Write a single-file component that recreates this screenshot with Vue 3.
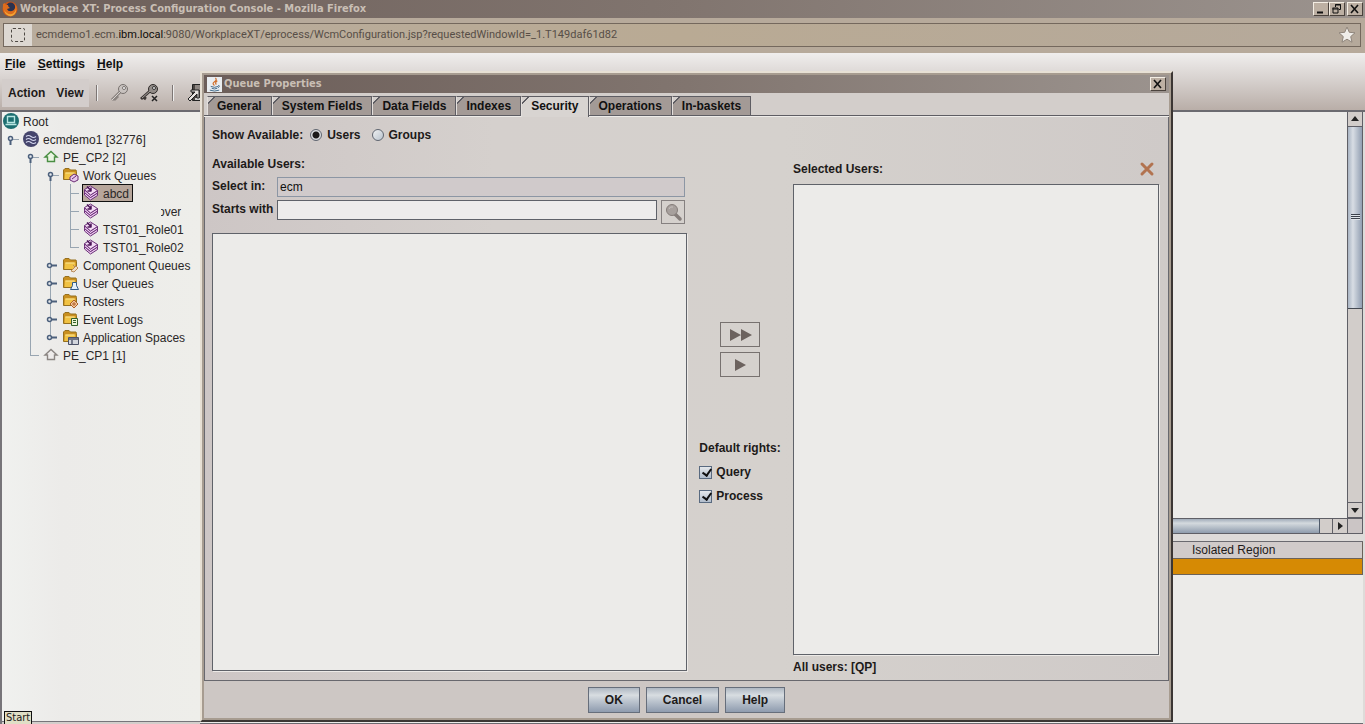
<script setup>
import { ref } from 'vue'

const menus = ['File', 'Settings', 'Help']
const tabs = ['General', 'System Fields', 'Data Fields', 'Indexes', 'Security', 'Operations', 'In-baskets']
const activeTab = ref('Security')
const source = ref('users')
const query = ref(true)
const process = ref(true)
const domain = ref('ecm')
const startsWith = ref('')

const tree = [
  { label: 'Root', icon: 'root', guides: [] },
  { label: 'ecmdemo1 [32776]', icon: 'server', guides: ['open-last'] },
  { label: 'PE_CP2 [2]', icon: 'home-on', guides: ['blank', 'open'] },
  { label: 'Work Queues', icon: 'f-work', guides: ['blank', 'line', 'open'] },
  { label: 'abcd', icon: 'queue', guides: ['blank', 'line', 'line', 'tee'], selected: true },
  { label: 'over', icon: 'queue', guides: ['blank', 'line', 'line', 'tee'], masked: true },
  { label: 'TST01_Role01', icon: 'queue', guides: ['blank', 'line', 'line', 'tee'] },
  { label: 'TST01_Role02', icon: 'queue', guides: ['blank', 'line', 'line', 'elbow'] },
  { label: 'Component Queues', icon: 'f-comp', guides: ['blank', 'line', 'closed'] },
  { label: 'User Queues', icon: 'f-user', guides: ['blank', 'line', 'closed'] },
  { label: 'Rosters', icon: 'f-roster', guides: ['blank', 'line', 'closed'] },
  { label: 'Event Logs', icon: 'f-log', guides: ['blank', 'line', 'closed'] },
  { label: 'Application Spaces', icon: 'f-app', guides: ['blank', 'line', 'closed-end'] },
  { label: 'PE_CP1 [1]', icon: 'home-off', guides: ['blank', 'elbow'] }
]
</script>

<template>
  <div class="window">
    <header class="titlebar">
      <svg class="fox" viewBox="0 0 16 16">
        <circle cx="8" cy="8" r="7.5" fill="#c9561a" />
        <circle cx="8.6" cy="6.2" r="4.6" fill="#2b3350" />
        <path d="M1 3Q0 12 5 14Q12 16 15 9Q15 5 13 3Q14 9 10 10Q6 11 5 8L8 7Q6 6 6 4Q3 4 3 2Z" fill="#de6c1c" />
        <path d="M2 9Q5 14 10 13Q14 11 14 7Q15 13 10 15Q4 16 2 9Z" fill="#f0a637" />
      </svg>
      <h1>Workplace XT: Process Configuration Console - Mozilla Firefox</h1>
      <div class="controls">
        <button aria-label="Minimize"><svg viewBox="0 0 12 10"><path d="M2 8.500h6" stroke="#111" stroke-width="2" /></svg></button>
        <button aria-label="Restore"><svg viewBox="0 0 12 10"><path d="M4.500 3V.5h5v5H8M4 1h6M1.500 4h5.500v5H2V4M1.500 5h6" fill="none" stroke="#111" /></svg></button>
        <button class="apart" aria-label="Close"><svg viewBox="0 0 12 10"><path d="M2 1l7 8M9 1L2 9" stroke="#111" stroke-width="1.600" /></svg></button>
      </div>
    </header>

    <div class="location">
      <div class="address">
        <span class="identity"><i></i></span>
        <span class="url">ecmdemo1.ecm.<b>ibm.local</b>:9080/WorkplaceXT/eprocess/WcmConfiguration.jsp?requestedWindowId=_1.T149daf61d82</span>
        <svg class="star" viewBox="0 0 18 18"><path d="M9 1l2.300 5.300 5.700.5-4.300 3.800 1.300 5.600L9 13.200l-5 3 1.300-5.600L1 6.800l5.700-.5z" fill="#efede9" stroke="#8f857b" /></svg>
      </div>
    </div>

    <div class="chrome">
      <nav class="menubar">
        <button v-for="m in menus" :key="m"><u>{{ m[0] }}</u>{{ m.slice(1) }}</button>
      </nav>
      <div class="toolbar">
        <div class="toolmenu"><button>Action</button><button>View</button></div>
        <i class="sep"></i>
        <button class="tool" aria-label="Connect">
          <svg viewBox="0 0 20 20"><path d="M2 17l8-8M4 15l2 2M6 13l2 2" stroke="#8b8480" stroke-width="3" /><circle cx="13" cy="6" r="4.500" fill="#c8c2bf" stroke="#77716e" /><path d="M2 17l8-8" stroke="#d8d3d0" /><circle cx="14" cy="5" r="1.500" fill="#fff" stroke="#77716e" /></svg>
        </button>
        <button class="tool" aria-label="Disconnect">
          <svg viewBox="0 0 20 20"><path d="M1 16l9-8M3 14l3 2" stroke="#3c3735" stroke-width="3" /><circle cx="13" cy="6" r="4.500" fill="#928c88" stroke="#2e2a28" /><path d="M2 15l8-7" stroke="#aaa39f" /><circle cx="14" cy="5" r="1.500" fill="#eee" stroke="#333" /><path d="M12 13l5 5M17 13l-5 5" stroke="#222" stroke-width="1.500" /></svg>
        </button>
        <i class="sep"></i>
        <button class="tool save" aria-label="Commit">
          <svg viewBox="0 0 20 20"><path d="M6.500 1.500h12v16h-12z" fill="#4a4542" stroke="#222" /><path d="M9 2h7v5H9z" fill="#8d8682" /><path d="M9 16h6" stroke="#ccc" stroke-width="2" /><path d="M2 16l7-7H5V7h8v8h-2v-4l-7 7z" fill="#e6e2df" stroke="#222" /></svg>
        </button>
      </div>
    </div>

    <main class="workspace">
      <ul class="tree">
        <li v-for="n in tree" :key="n.label" class="node">
          <svg v-for="(g, i) in n.guides" :key="i" class="guide" viewBox="0 0 20 18">
            <g fill="none" stroke="#98a5b1">
              <path v-if="g === 'line' || g === 'tee' || g === 'closed'" d="M8.500 0v18" />
              <path v-if="g === 'elbow' || g === 'closed-end'" d="M8.500 0v9" />
              <path v-if="g === 'tee' || g === 'elbow' || g === 'open' || g === 'open-last'" d="M8 9.500h9" />
              <path v-if="g === 'open'" d="M8.500 9v9" />
            </g>
            <g v-if="g === 'open' || g === 'open-last'" stroke="#4c607c"><path d="M8.500 9v6" stroke-width="2" /><circle cx="8.500" cy="8.500" r="2" fill="#e6eaee" stroke-width="1.500" /></g>
            <g v-if="g === 'closed' || g === 'closed-end'" stroke="#4c607c"><path d="M8 9.500h7" stroke-width="2" /><circle cx="7.500" cy="9.500" r="2" fill="#e6eaee" stroke-width="1.500" /></g>
          </svg>
          <a href="#" class="entry" :class="{ selected: n.selected }">
            <svg class="icon" viewBox="0 0 18 18">
              <template v-if="n.icon === 'root'">
                <circle cx="9" cy="9" r="8" fill="#1c6e70" />
                <path d="M5.500 4.500h7v6h-7zM3.500 12.500h11" fill="none" stroke="#b7e6e2" stroke-width="1.400" />
              </template>
              <template v-else-if="n.icon === 'server'">
                <circle cx="9" cy="9" r="8" fill="#45456c" />
                <path d="M4 6.500q2.500-2 5 0t5 0M4 9.500q2.500-2 5 0t5 0M4 12.500q2.500-2 5 0t5 0" fill="none" stroke="#d3d6ee" stroke-width="1.200" />
              </template>
              <path v-else-if="n.icon === 'home-on'" d="M3 9L9 3.500 15 9h-2.500v4.500h-7V9z" fill="#eaf5e2" stroke="#4a8e43" stroke-width="1.400" />
              <path v-else-if="n.icon === 'home-off'" d="M3 9L9 3.500 15 9h-2.500v4.500h-7V9z" fill="#eeeceb" stroke="#8b8683" stroke-width="1.400" />
              <g v-else-if="n.icon === 'queue'" stroke="#6b3078" stroke-linejoin="round">
                <path d="M2.500 11l6 5 7-4.500V9l-7 4.500-6-5z" fill="#ecc9ef" />
                <path d="M2.500 8.500l6 5 7-4.500V6.500l-7 4.500-6-5z" fill="#ecc9ef" />
                <path d="M2.500 5.500L8.500 2l7 4.500-7 4.500z" fill="#f4dcf5" />
                <path d="M5 2.500l4 4M9 3.500V7H5.500" fill="none" stroke="#4a1457" stroke-width="1.500" />
              </g>
              <g v-else>
                <path d="M1.500 13.500V4L3 2.500h4L8.500 4H14l.5 1.500v8z" fill="#c98f1f" stroke="#96701f" />
                <path d="M2.500 13L3 6.500h10.500l-.5 6.500z" fill="#f0c244" />
                <path d="M3.500 7h9" stroke="#fbe596" />
                <g v-if="n.icon === 'f-work'"><path d="M8 11l4-3 4 2v4l-4 2-4-2z" fill="#e8c8ec" stroke="#6a2c73" /><path d="M10 13l4-3" stroke="#6a2c73" /></g>
                <path v-if="n.icon === 'f-comp'" d="M9 15l5-5 2 2-4 4zM11 9l2 2" fill="#f1dfc5" stroke="#b98d5e" />
                <path v-if="n.icon === 'f-user'" d="M8.500 15.500l2-4v-3h4v3l2 4z" fill="#e4f1fb" stroke="#315b86" />
                <path v-if="n.icon === 'f-roster'" d="M8 12l4-4 4 4-4 4zM10 12h4M12 10v4" fill="#f3c99e" stroke="#b0602a" />
                <path v-if="n.icon === 'f-log'" d="M9.500 8.500h6v7h-6zM11 10.500h3M11 12.500h3" fill="#eef5d8" stroke="#33602b" />
                <g v-if="n.icon === 'f-app'"><path d="M6.500 9.500h10v7h-10z" fill="#d3d6dd" stroke="#4d5368" /><path d="M7 11h9M10 12v4" stroke="#4d5368" stroke-width="1.400" /></g>
              </g>
            </svg>
            <span :class="{ masked: n.masked }">{{ n.label }}</span>
          </a>
        </li>
      </ul>

      <div class="details">
        <section class="canvas">
          <div class="sheet"></div>
          <div class="vscroll">
            <button aria-label="Scroll up"><svg viewBox="0 0 14 14"><path d="M7 4l4 5H3z" fill="#222" /></svg></button>
            <div class="vthumb"><i></i></div>
            <div class="vtrack"></div>
            <button aria-label="Scroll down"><svg viewBox="0 0 14 14"><path d="M7 10L3 5h8z" fill="#222" /></svg></button>
          </div>
          <div class="hscroll">
            <div class="hthumb"></div>
            <div class="htrack"></div>
            <button aria-label="Scroll right"><svg viewBox="0 0 14 14"><path d="M10 7L5 11V3z" fill="#222" /></svg></button>
          </div>
          <i class="corner"></i>
        </section>
        <section class="regions">
          <table>
            <thead><tr><td></td><th>Isolated Region</th></tr></thead>
            <tbody><tr><td></td><td></td></tr></tbody>
          </table>
        </section>
      </div>
    </main>

    <section class="dialog" role="dialog" aria-labelledby="dialog-title">
      <header class="dialog-title">
        <svg class="java" viewBox="0 0 16 16"><path d="M0 0h16v16H0z" fill="#e9edf0" /><path d="M9 1q2 2-1 4t0 4M11 4q-3 2-1 4" fill="none" stroke="#d06f2c" stroke-width="1.300" /><path d="M4 10q4 2 8 0M5 12q3 1.500 6 0M3 14q5 2 10 0M12 9q2.500 0 0 2.500" fill="none" stroke="#3f6788" /></svg>
        <h2 id="dialog-title">Queue Properties</h2>
        <button aria-label="Close dialog"><svg viewBox="0 0 12 10"><path d="M2 1l7 8M9 1L2 9" stroke="#111" stroke-width="1.600" /></svg></button>
      </header>

      <div class="tabs" role="tablist">
        <button v-for="t in tabs" :key="t" role="tab" :aria-selected="t === activeTab" :class="{ active: t === activeTab }" @click="activeTab = t">{{ t }}</button>
      </div>

      <div class="panel">
        <div class="available">
          <div class="show">
            <span>Show Available:</span>
            <label><input v-model="source" type="radio" name="source" value="users" />Users</label>
            <label><input v-model="source" type="radio" name="source" value="groups" />Groups</label>
          </div>
          <h3>Available Users:</h3>
          <div class="field">
            <label for="domain">Select in:</label>
            <input id="domain" v-model="domain" class="readonly" readonly />
          </div>
          <div class="field">
            <label for="starts">Starts with</label>
            <input id="starts" v-model="startsWith" />
            <button class="search" aria-label="Search">
              <svg viewBox="0 0 22 22"><path d="M13 13l5 5" stroke="#857d7a" stroke-width="3.500" stroke-linecap="round" /><circle cx="10" cy="9" r="5.500" fill="#a7a09d" stroke="#857d7a" /><path d="M7 8q1-3 4-2" fill="none" stroke="#c5bfbc" /></svg>
            </button>
          </div>
          <div class="list"></div>
        </div>

        <div class="transfer">
          <div class="arrows">
            <button aria-label="Add all"><svg viewBox="0 0 24 14"><path d="M2 1l11 6-11 6zM13 1l11 6-11 6z" fill="#6c625e" /></svg></button>
            <button aria-label="Add"><svg viewBox="0 0 24 14"><path d="M7 1l11 6-11 6z" fill="#6c625e" /></svg></button>
          </div>
          <fieldset>
            <legend>Default rights:</legend>
            <label><input v-model="query" type="checkbox" />Query</label>
            <label><input v-model="process" type="checkbox" />Process</label>
          </fieldset>
        </div>

        <div class="chosen">
          <div class="chosen-head">
            <h3>Selected Users:</h3>
            <button aria-label="Remove"><svg viewBox="0 0 16 16"><path d="M3 3l10 10M13 3L3 13" stroke="#b27350" stroke-width="3" stroke-linecap="round" /></svg></button>
          </div>
          <div class="list"></div>
          <p>All users: [QP]</p>
        </div>
      </div>

      <footer class="actions">
        <button>OK</button><button>Cancel</button><button>Help</button>
      </footer>
    </section>

    <div class="tip">Start</div>
  </div>
</template>

<style>
body { overflow: hidden; }
</style>

<style scoped>
* { box-sizing: border-box; }
.window { position: relative; display: flex; flex-direction: column; height: 100vh; overflow: hidden; background: #d3cecb; font: 12px/18px "Liberation Sans", Arial, sans-serif; color: #1d1a19; }
button, input { font: inherit; color: inherit; margin: 0; padding: 0; border: 0; background: none; }
h1, h2, h3, p, ul, fieldset { margin: 0; padding: 0; border: 0; font-size: 12px; }
svg { display: block; flex: none; }

.titlebar, .dialog-title { display: flex; align-items: center; gap: 2px; height: 18px; background: linear-gradient(90deg, #6c5e59, #81756f 50%, #9b938e); }
.titlebar { padding: 0 2px; }
.titlebar h1, .dialog-title h2 { flex: 1; font: bold 11px/18px "DejaVu Sans Condensed", "DejaVu Sans", sans-serif; color: #c9bfb5; white-space: nowrap; }
.fox { width: 16px; height: 16px; }
.controls { display: flex; }
.controls button, .dialog-title button { width: 16px; height: 14px; display: grid; place-items: center; background: #bdb0a3; border: 1px solid; border-color: #f3ede3 #4b433d #4b433d #f3ede3; }
.controls svg, .dialog-title button svg { width: 12px; height: 10px; }
.controls .apart { margin-left: 2px; }

.location { height: 35px; padding: 5px 4px 6px 3px; background: #b7aa9b; }
.address { display: flex; align-items: center; height: 24px; border: 1px solid #74685d; background: linear-gradient(90deg, #b9ad9e, #b9aa94 50%, #b5a99b); }
.identity { width: 28px; height: 22px; display: grid; place-items: center; background: #ddd8d2; }
.identity i { width: 14px; height: 14px; border: 1px dashed #4d4843; border-radius: 2px; }
.url { flex: 1; padding-left: 4px; font: 11px/22px Roboto, "Open Sans", sans-serif; color: #574e47; white-space: nowrap; }
.url b { font-weight: normal; color: #0d0b0a; }
.star { width: 18px; height: 18px; margin-right: 4px; }

.chrome { background: linear-gradient(#f0eeed, #d5cfcc 50%, #b9aea8); border-bottom: 2px solid #6b6a70; height: 59px; }
.menubar { display: flex; gap: 12px; height: 22px; padding: 0 5px; font-weight: bold; color: #111; align-items: center; }
.toolbar { display: flex; align-items: center; height: 35px; }
.toolmenu { display: flex; gap: 11px; height: 28px; padding: 0 6px; margin-left: 2px; background: #d3cdcb; font-weight: bold; }
.sep { width: 2px; height: 16px; margin: 0 12px 0 7px; border-left: 1px solid #7d7674; border-right: 1px solid #eee; }
.tool { width: 20px; height: 20px; margin-right: 10px; }
.tool svg { width: 20px; height: 20px; }
.tool + .sep { margin: 0 12px 0 2px; }

.workspace { flex: 1; min-height: 0; display: flex; border-left: 2px solid #77757a; }
.tree { flex: none; width: 198px; list-style: none; background: linear-gradient(90deg, #f0f1ef, #ecebe9 30%, #eeeeea); border-bottom: 1px solid #77757a; margin-bottom: 2px; }
.node { display: flex; height: 18px; }
.guide { width: 20px; height: 18px; }
.entry { display: flex; align-items: center; gap: 3px; height: 18px; padding-right: 4px; line-height: 20px; color: #2a2727; text-decoration: none; white-space: nowrap; }
.entry span { height: 18px; }
.icon { width: 18px; height: 18px; }
.selected { background: #b7a69b; outline: 1px solid #111; outline-offset: -1px; }
.masked { padding-left: 55px; clip-path: inset(0 0 0 58px); }

.details { flex: 1; min-width: 0; display: flex; flex-direction: column; background: #dedbd9; padding-right: 2px; }
.canvas { flex: none; height: 70%; max-height: 422px; display: grid; grid-template: 1fr 16px / 1fr 16px; }
.sheet { background: #ecebe9; }
.vscroll, .hscroll { display: flex; background: #d2cdca; border: 1px solid #5f5f66; }
.vscroll { flex-direction: column; border-top: 0; }
.vscroll button { height: 15px; border-bottom: 1px solid #5f5f66; }
.vscroll button:last-child { border-top: 1px solid #5f5f66; border-bottom: 0; }
.vscroll svg, .hscroll svg { width: 14px; height: 14px; }
.vthumb { flex: 181; display: grid; place-items: center; border-bottom: 1px solid #454a52; background: linear-gradient(90deg, #a9b4c3, #d8dde4 35%, #929fb2); }
.vthumb i { width: 9px; height: 6px; background: repeating-linear-gradient(#3c424c 0 1px, #dfe4e9 1px 2px); }
.vtrack { flex: 194; }
.hthumb { flex: 1; border-right: 1px solid #4e5a6a; background: linear-gradient(#a1acba, #d4dade 30%, #8f9cad); }
.htrack { width: 12px; }
.hscroll { border-right: 0; }
.hscroll button { width: 15px; border-left: 1px solid #5f5f66; }
.corner { border: 1px solid #5f5f66; background: #cbc5c5; }
.regions { flex: 1; margin-top: 7px; background: #ecebe9; border: solid #6b6a70; border-width: 1px 0; }
.regions table { width: 100%; border-collapse: collapse; table-layout: fixed; }
.regions td, .regions th { height: 16px; padding: 0; line-height: 15px; border-bottom: 1px solid #6b6259; border-right: 1px solid #6b6259; }
.regions th { width: 190px; padding: 1px 0 0 19px; line-height: 15px; text-align: left; font-weight: normal; }
.regions thead { background: #d1cbca; }
.regions tbody { background: #d68a04; }

.dialog { position: absolute; top: 71px; right: 192px; bottom: 2px; left: 200px; display: flex; flex-direction: column; padding: 2px; border: 2px solid; border-color: #e7e0d4 #3c3634 #3c3634 #e7e0d4; background: #d3cecb; box-shadow: inset 0 0 0 2px #a79c90; font-weight: bold; }
.dialog-title { padding: 0 3px 0 3px; flex: none; }
.dialog-title svg.java { width: 15px; height: 15px; }

.tabs { display: flex; align-items: flex-start; height: 23px; flex: none; padding: 3px 0 0 3px; border-bottom: 1px solid #5e5d63; }
.tabs button { height: 19px; padding: 0 9px; border: 1px solid #5e5d63; border-left-color: #e3dfdc; border-bottom: 0; font-weight: bold; line-height: 17px; color: #111; white-space: nowrap; background: linear-gradient(135deg, #d3cecb 4px, #5e5d63 4px 5px, #a39a96 5px); }
.tabs .active { height: 21px; padding-bottom: 2px; z-index: 1; background: linear-gradient(135deg, #d3cecb 4px, #5e5d63 4px 5px, #d8d4d1 5px); }

.panel { flex: 1; min-height: 0; display: grid; grid-template-columns: minmax(0, 475fr) 106px minmax(0, 366fr); padding: 0 10px 9px 8px; border-top: 1px solid #eeece9; border-bottom: 1px solid #68686e; background: linear-gradient(90deg, #cdc6c5, #d5d0cd 30%, #d5d1cd 60%, #cfcac8); box-shadow: inset 1px 0 #68686e, inset -1px 0 #68686e; }
.available, .chosen, .transfer { display: flex; flex-direction: column; min-height: 0; }
.show { display: flex; align-items: center; height: 35px; gap: 7px; }
.show label { display: flex; align-items: center; gap: 5px; margin-right: 4px; }
.show input { appearance: none; width: 12px; height: 12px; border: 1px solid #5f6570; border-radius: 50%; background: linear-gradient(135deg, #eff0f1, #b9c3ce); }
.show input:checked { background: radial-gradient(#1a1a1a 3px, #d9dde0 4px); }
.available h3 { height: 25px; line-height: 24px; }
.field { display: flex; align-items: flex-start; height: 23px; padding-right: 2px; }
.field label { width: 65px; flex: none; white-space: nowrap; }
.field input { flex: 1; min-width: 0; height: 20px; padding: 0 2px; border: 1px solid #5f6269; background: #edeceb; font-weight: normal; color: #111; }
.field .readonly { border-color: #8c96a4; background: #d0cacb; }
.search { width: 24px; height: 24px; margin-left: 4px; border: 1px solid #858080; }
.search svg { width: 22px; height: 22px; }
.list { flex: 1; min-height: 0; border: 1px solid #5f6269; background: #ecebe9; box-shadow: 1px 1px #edeae7; }
.available .list { margin-top: 10px; }

.transfer { align-items: center; padding-top: 205px; }
.arrows { display: flex; flex-direction: column; gap: 5px; }
.arrows button { width: 40px; height: 25px; display: grid; place-items: center; border: 1px solid #77716f; }
.arrows svg { width: 24px; height: 14px; }
fieldset { display: flex; flex-direction: column; margin-top: 59px; white-space: nowrap; }
legend { padding: 0; height: 24px; line-height: 24px; }
fieldset label { display: flex; align-items: center; gap: 4px; height: 24px; }
fieldset input { appearance: none; width: 13px; height: 13px; border: 1px solid #596a80; background: linear-gradient(#e5e8eb, #b0bccb); }
fieldset input:checked::after { content: ""; display: block; width: 4px; height: 7px; margin: 0 0 0 4px; border: solid #111; border-width: 0 2px 2px 0; transform: rotate(35deg); }

.chosen-head { display: flex; align-items: center; justify-content: space-between; height: 67px; padding: 36px 4px 0 0; }
.chosen-head svg { width: 16px; height: 16px; }
.chosen .list { margin-bottom: 3px; }
.chosen p { height: 13px; }

.actions { display: flex; flex: none; align-items: flex-end; justify-content: center; gap: 6px; height: 37px; padding-bottom: 5px; background: #cdc7c4; }
.actions button { height: 26px; padding: 0 16px; border: 1px solid #666e7b; background: linear-gradient(#aeb7c2, #d8dde1 30%, #c1c9d2 50%, #8e9bae); font-weight: bold; }

.tip { position: absolute; left: 4px; bottom: 0; height: 13px; padding: 0 1px; border: 1px solid #111; border-bottom: 0; background: #e0dfc6; font: 11px/12px "DejaVu Sans Condensed", "DejaVu Sans", sans-serif; }
</style>
